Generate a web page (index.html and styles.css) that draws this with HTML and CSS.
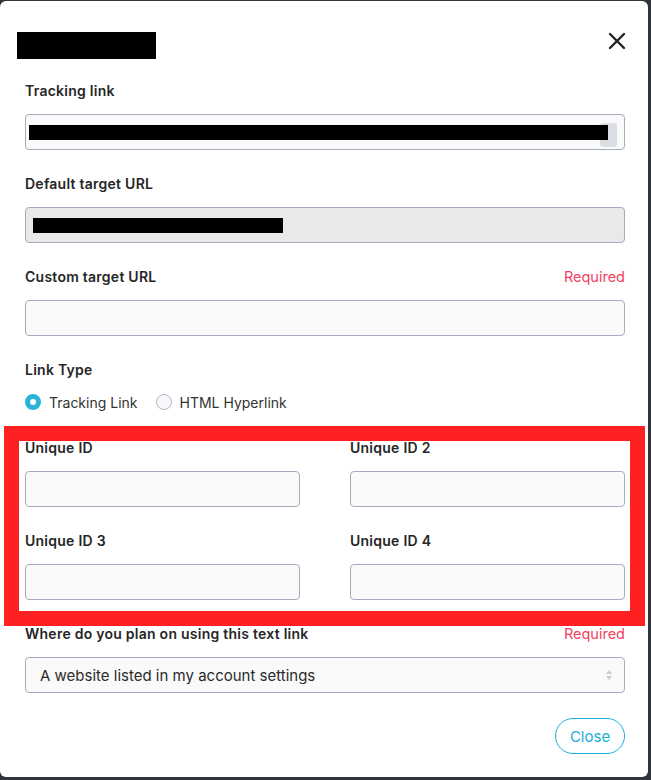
FILE: index.html
```html
<!DOCTYPE html>
<html lang="en">
<head>
<meta charset="utf-8">
<title>Get link</title>
<link rel="stylesheet" href="styles.css">
</head>
<body>
<div class="modal">
  <div class="modal-header">
    <div class="title-redacted"></div>
    <button class="close-x" aria-label="Close">
      <svg width="18" height="18" viewBox="0 0 18 18"><path d="M2 2 L16 16 M16 2 L2 16" stroke="#222" stroke-width="2.4" stroke-linecap="round"/></svg>
    </button>
  </div>

  <div class="field">
    <div class="label-row"><span class="label">Tracking link</span></div>
    <div class="input with-handle">
      <div class="redact redact-long"></div>
      <div class="handle"></div>
    </div>
  </div>

  <div class="field">
    <div class="label-row"><span class="label">Default target URL</span></div>
    <div class="input disabled">
      <div class="redact redact-short"></div>
    </div>
  </div>

  <div class="field">
    <div class="label-row"><span class="label">Custom target URL</span><span class="required">Required</span></div>
    <div class="input"></div>
  </div>

  <div class="link-type">
    <div class="label-row"><span class="label">Link Type</span></div>
    <div class="radios">
      <label class="radio"><span class="dot checked"></span>Tracking Link</label>
      <label class="radio"><span class="dot"></span>HTML Hyperlink</label>
    </div>
  </div>

  <div class="highlight">
    <div class="id-grid">
      <div class="field">
        <div class="label-row"><span class="label">Unique ID</span></div>
        <div class="input"></div>
      </div>
      <div class="field">
        <div class="label-row"><span class="label">Unique ID 2</span></div>
        <div class="input"></div>
      </div>
      <div class="field">
        <div class="label-row"><span class="label">Unique ID 3</span></div>
        <div class="input"></div>
      </div>
      <div class="field">
        <div class="label-row"><span class="label">Unique ID 4</span></div>
        <div class="input"></div>
      </div>
    </div>
  </div>

  <div class="field">
    <div class="label-row"><span class="label">Where do you plan on using this text link</span><span class="required">Required</span></div>
    <div class="input select">
      <span class="select-text">A website listed in my account settings</span>
      <svg class="arrows" width="8" height="12" viewBox="0 0 8 12"><path d="M4 1 L7 5 H1 Z M4 11 L7 7 H1 Z" fill="#c9ccd3"/></svg>
    </div>
  </div>

  <div class="footer">
    <button class="btn-close">Close</button>
  </div>
</div>
</body>
</html>
```

FILE: styles.css
```css
* { box-sizing: border-box; }
html, body { margin: 0; padding: 0; }
body {
  background: #30353c;
  font-family: "Inter", "Open Sans", "Liberation Sans", sans-serif;
  color: #222;
  width: 651px;
  height: 780px;
  overflow: hidden;
}
.modal {
  width: 648px;
  height: 776px;
  margin-top: 1px;
  background: #fff;
  border-radius: 6px;
  padding: 29px 23px 0 25px;
  display: flex;
  flex-direction: column;
}
.modal-header {
  display: flex;
  justify-content: space-between;
  align-items: flex-start;
  height: 29px;
  margin-bottom: 21px;
}
.title-redacted {
  width: 139px;
  height: 27px;
  margin-top: 2px;
  background: #000;
  margin-left: -8px;
}
.close-x {
  border: 0;
  background: none;
  padding: 0;
  margin-top: 2px;
  margin-right: -1px;
  width: 18px;
  height: 18px;
  cursor: pointer;
}
.field { display: flex; flex-direction: column; margin-bottom: 23px; }
.label-row {
  display: flex;
  justify-content: space-between;
  align-items: center;
  height: 20px;
  margin-bottom: 14px;
}
.label { font-size: 14px; font-weight: 600; color: #262626; letter-spacing: 0.25px; }
.required { font-size: 14.5px; color: #f43f5e; }
.input {
  height: 36px;
  border: 1px solid #a3adbf;
  border-radius: 4px;
  background: #fafafa;
  position: relative;
  display: flex;
  align-items: center;
}
.input.disabled { background: #e9e9e9; }
.redact { background: #000; height: 15px; }
.redact-long { width: 579px; margin-left: 3px; }
.redact-short { width: 250px; margin-left: 7px; }
.handle {
  position: absolute;
  right: 7px;
  top: 8px;
  width: 17px;
  height: 24px;
  background: #dcdee6;
  border-radius: 3px;
}
.with-handle .redact { position: relative; z-index: 1; }
.link-type { display: flex; flex-direction: column; margin-bottom: 29px; }
.link-type .label-row { margin-bottom: 13px; }
.radios { display: flex; align-items: center; gap: 18px; height: 20px; }
.radio {
  display: flex;
  align-items: center;
  gap: 8px;
  font-size: 14px;
  color: #333;
}
.dot {
  width: 16px;
  height: 16px;
  border-radius: 50%;
  border: 1px solid #b2b7c6;
  background: #f7f8fa;
  display: inline-block;
}
.dot.checked {
  border: 5px solid #2ab4d9;
  background: #fff;
}
.highlight {
  outline: 15px solid #ff2121;
  margin: 0 -5px 12px -6px;
  padding: 0 5px 0 6px;
}
.id-grid {
  display: grid;
  grid-template-columns: 1fr 1fr;
  column-gap: 50px;
  margin-top: -4px;
}
.id-grid .field:nth-child(3), .id-grid .field:nth-child(4) { margin-bottom: 11px; }
.select { padding: 0 14px; justify-content: space-between; }
.select-text { font-size: 15px; color: #2a2a2a; }
.arrows { margin-right: -3px; }
.footer {
  display: flex;
  justify-content: flex-end;
  margin-top: 2px;
}
.btn-close {
  width: 70px;
  height: 36px;
  border-radius: 18px;
  border: 1px solid #1aaed4;
  background: #fff;
  color: #1aaed4;
  font-family: inherit;
  font-size: 15px;
  cursor: pointer;
}
```
